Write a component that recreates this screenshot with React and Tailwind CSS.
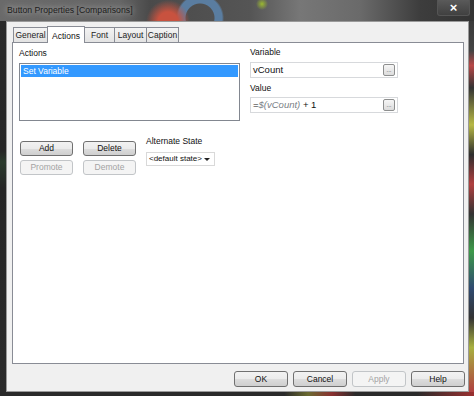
import React from 'react';

const font = { fontFamily: '"Liberation Sans", "DejaVu Sans", sans-serif' };

function Btn({ label, disabled, className = '' }) {
    return (
        <div
            className={
                'flex items-center justify-center rounded-[3px] border text-[8.5px] leading-none ' +
                (disabled
                    ? 'border-[#c2c5c8] bg-[#f4f4f4] text-[#a3a3a3] '
                    : 'border-[#707070] bg-[linear-gradient(#f2f2f2,#ebebeb_50%,#dddddd_50%,#cfcfcf)] text-[#111] ') +
                className
            }
        >
            {label}
        </div>
    );
}

function DotsButton() {
    return (
        <div className="flex h-[12px] w-[12px] items-end justify-center rounded-[2px] border border-[#8e8f8f] bg-[linear-gradient(#f6f6f6,#dcdcdc)] pb-[2px] text-[6px] leading-none text-[#333]">
            ...
        </div>
    );
}

function Tab({ label, active, className = '' }) {
    return active ? (
        <div className={'relative z-10 -mb-px flex h-[17px] items-start justify-center border border-b-0 border-[#898c95] bg-white pt-[3px] text-[8.5px] text-[#111] ' + className}>
            {label}
        </div>
    ) : (
        <div className={'flex h-[15px] items-center justify-center border border-b-0 border-[#898c95] bg-[linear-gradient(#f3f3f3,#e3e3e3)] text-[8.5px] text-[#222] ' + className}>
            {label}
        </div>
    );
}

export default function App() {
    return (
        <div className="flex h-[396px] w-[474px] flex-col bg-[#2d2d2d]" style={font}>
            {/* title bar */}
            <div className="flex h-[21px] items-center justify-between bg-[radial-gradient(circle_at_168px_22px,#c8523f_0,#c8523f_10px,transparent_22px),radial-gradient(circle_at_200px_18px,transparent_14px,#5a7da0_15px,#5a7da0_22px,transparent_24px),radial-gradient(circle_at_262px_4px,#9ab830_0,transparent_6px),linear-gradient(90deg,#6a6a6a,#666_120px,#4a4a4a_150px,#555_250px,#777_300px,#6a6a6a_360px,#3d3d3d_420px,#333)]">
                <span className="pl-[7px] pt-[1px] text-[8.7px] text-[#1c1c1c] [text-shadow:0_0_6px_rgba(255,255,255,0.7)]">
                    Button Properties [Comparisons]
                </span>
                <div className="mb-[5px] mr-[4px] flex h-[16px] w-[33px] items-center justify-center self-start rounded-b-[3px] border border-t-0 border-[#555] bg-[linear-gradient(#5a5a5a,#404040)] text-[13px] font-bold leading-none text-white">
                    ×
                </div>
            </div>

            <div className="flex flex-1">
                <div className="w-[6px] bg-[linear-gradient(#2a2a2a,#262626_35%,#2a3a2c_38%,#252525_45%,#2b2b2b)]" />

                {/* client area */}
                <div className="flex flex-1 flex-col border border-[#9a9a9a] bg-[#f0f0f0]">
                    {/* tabs */}
                    <div className="flex items-end pl-[6px] pt-[4px]">
                        <Tab label="General" className="w-[35px]" />
                        <Tab label="Actions" active className="-ml-px w-[38px]" />
                        <Tab label="Font" className="-ml-px w-[31px]" />
                        <Tab label="Layout" className="-ml-px w-[33px]" />
                        <Tab label="Caption" className="-ml-px w-[33px]" />
                    </div>

                    {/* tab panel */}
                    <div className="ml-[5px] mr-[4px] flex h-[322px] border border-[#898c95] bg-white">
                        <div className="ml-[6px] flex w-[221px] flex-col">
                            <div className="mt-[4px] h-[13px] text-[8.5px] leading-[13px] text-[#111]">Actions</div>
                            <div className="mt-[3px] h-[58px] border border-[#828790] bg-white p-px">
                                <div className="h-[12px] bg-[#3399ff] pl-[2px] text-[8.5px] leading-[12px] text-white">
                                    Set Variable
                                </div>
                            </div>

                            <div className="mt-[14px] flex items-start">
                                <div className="ml-px mt-[6px] flex flex-col gap-[4px]">
                                    <div className="flex gap-[10px]">
                                        <Btn label="Add" className="h-[15px] w-[53px]" />
                                        <Btn label="Delete" className="h-[15px] w-[53px]" />
                                    </div>
                                    <div className="flex gap-[10px]">
                                        <Btn label="Promote" disabled className="h-[15px] w-[53px]" />
                                        <Btn label="Demote" disabled className="h-[15px] w-[53px]" />
                                    </div>
                                </div>
                                <div className="ml-[10px] flex flex-col">
                                    <div className="h-[13px] text-[8.5px] leading-[13px] text-[#111]">Alternate State</div>
                                    <div className="mt-[4px] flex h-[14px] w-[69px] items-center justify-between whitespace-nowrap border border-[#d9d9d9] bg-white pl-[2px] pr-[4px] text-[8px] leading-none text-[#111]">
                                        <span>&lt;default state&gt;</span>
                                        <span className="h-0 w-0 border-x-[3px] border-t-[3px] border-x-transparent border-t-[#222]" />
                                    </div>
                                </div>
                            </div>
                        </div>

                        <div className="ml-[10px] flex w-[148px] flex-col">
                            <div className="mt-[3px] h-[13px] text-[8.5px] leading-[13px] text-[#111]">Variable</div>
                            <div className="mt-[3px] flex h-[16px] items-center justify-between border border-[#d7d9dc] bg-white pl-[2px] pr-[2px]">
                                <span className="text-[9.5px] text-[#111]">vCount</span>
                                <DotsButton />
                            </div>
                            <div className="mt-[4px] h-[13px] text-[8.5px] leading-[13px] text-[#111]">Value</div>
                            <div className="mt-[2px] flex h-[16px] items-center justify-between border border-[#d7d9dc] bg-white pl-[2px] pr-[2px]">
                                <span className="text-[9.5px] text-[#111]">
                                    =<span className="italic text-[#7a7f86]">$(vCount)</span> + 1
                                </span>
                                <DotsButton />
                            </div>
                        </div>
                    </div>

                    {/* bottom buttons */}
                    <div className="mr-[3px] mt-[7px] flex justify-end gap-[5px]">
                        <Btn label="OK" className="h-[16px] w-[54px]" />
                        <Btn label="Cancel" className="h-[16px] w-[54px]" />
                        <Btn label="Apply" disabled className="h-[16px] w-[54px]" />
                        <Btn label="Help" className="h-[16px] w-[54px]" />
                    </div>
                </div>

                <div className="w-[5px] bg-[linear-gradient(#3a3a3a,#444_8%,#b84848_12%,#333_18%,#b7b845_28%,#2e2e2e_36%,#b04040_44%,#333_52%,#3d9a4a_62%,#2f4a70_72%,#333_80%,#a8b040_88%,#b04040)]" />
            </div>
            <div className="h-[4px] bg-[linear-gradient(90deg,#2a2a2a,#2a2a2a_60%,#6a6a30_65%,#8a3030_70%,#2a2a2a_75%,#2a2a2a_88%,#9a3030)]" />
        </div>
    );
}
